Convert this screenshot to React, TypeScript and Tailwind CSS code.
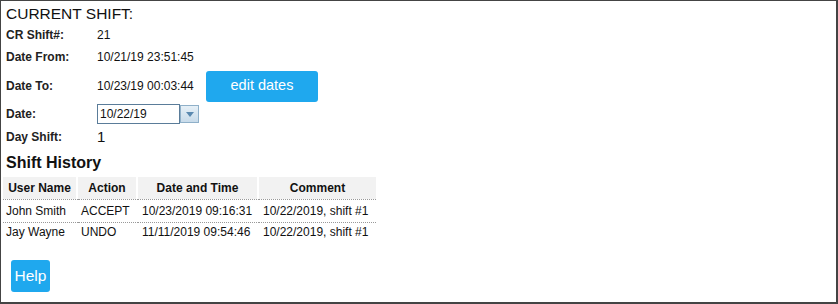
import React from "react";

const rows = [
  { user: "John Smith", action: "ACCEPT", time: "10/23/2019 09:16:31", comment: "10/22/2019, shift #1" },
  { user: "Jay Wayne", action: "UNDO", time: "11/11/2019 09:54:46", comment: "10/22/2019, shift #1" },
];

function Label({ children }: { children: React.ReactNode }) {
  return <div className="w-[91px] shrink-0 font-bold text-[12px] text-[#222]">{children}</div>;
}

export default function App() {
  return (
    <div
      className="w-[838px] h-[304px] bg-white border-t border-l border-r-2 border-b-2 border-[#444] px-[5px] text-[#111] overflow-hidden"
      style={{ fontFamily: '"Liberation Sans", Arial, sans-serif' }}
    >
      {/* current shift */}
      <div className="h-[24px] pt-[3px] text-[15.5px] leading-[20px]">CURRENT SHIFT:</div>
      <div className="flex items-center h-[20px]">
        <Label>CR Shift#:</Label>
        <div className="text-[12px]">21</div>
      </div>
      <div className="flex items-center h-[24px]">
        <Label>Date From:</Label>
        <div className="text-[12px]">10/21/19 23:51:45</div>
      </div>
      <div className="flex items-center h-[34px]">
        <Label>Date To:</Label>
        <div className="text-[12px] w-[109px]">10/23/19 00:03:44</div>
        <button className="w-[112px] h-[31px] rounded-[3px] bg-[#1fa8ee] text-white text-[14.5px]">
          edit dates
        </button>
      </div>
      <div className="flex items-center h-[22px]">
        <Label>Date:</Label>
        <div className="flex items-center">
          <div className="w-[83px] h-[20px] border border-[#5a7c99] bg-white text-[12px] leading-[18px] pl-[2px]">
            10/22/19
          </div>
          <div className="w-[19px] h-[18px] border border-[#8fb0c9] bg-gradient-to-b from-[#e6f0f7] to-[#c8dbea] flex items-center justify-center">
            <svg width="8" height="5" viewBox="0 0 8 5">
              <path d="M0 0h8L4 5z" fill="#5a89b0" />
            </svg>
          </div>
        </div>
      </div>
      <div className="flex items-center h-[24px]">
        <Label>Day Shift:</Label>
        <div className="text-[15px]">1</div>
      </div>

      {/* shift history */}
      <div className="h-[28px] flex items-center font-bold text-[16px]">Shift History</div>
      <table className="-ml-[3px] border-separate border-spacing-0 text-[12px]">
        <thead>
          <tr className="h-[22px]">
            <th className="w-[75px] bg-[#f2f2f2] border-r-2 border-white font-bold">User Name</th>
            <th className="w-[60px] bg-[#f2f2f2] border-r-2 border-white font-bold">Action</th>
            <th className="w-[121px] bg-[#f2f2f2] border-r-2 border-white font-bold">Date and Time</th>
            <th className="w-[117px] bg-[#f2f2f2] font-bold">Comment</th>
          </tr>
        </thead>
        <tbody>
          {rows.map((r, i) => (
            <tr key={i} className={i == 0 ? "h-[23px]" : "h-[19px]"}>
              <td className="pl-[3px] border-t border-dotted border-[#999] whitespace-nowrap">{r.user}</td>
              <td className="pl-[3px] border-t border-dotted border-[#999] whitespace-nowrap">{r.action}</td>
              <td className="pl-[4px] border-t border-dotted border-[#999] whitespace-nowrap">{r.time}</td>
              <td className="pl-[4px] border-t border-dotted border-[#999] whitespace-nowrap">{r.comment}</td>
            </tr>
          ))}
        </tbody>
      </table>

      <button className="mt-[19px] ml-[5px] w-[39px] h-[32px] rounded-[3px] bg-[#1fa8ee] text-white text-[15.5px]">
        Help
      </button>
    </div>
  );
}
